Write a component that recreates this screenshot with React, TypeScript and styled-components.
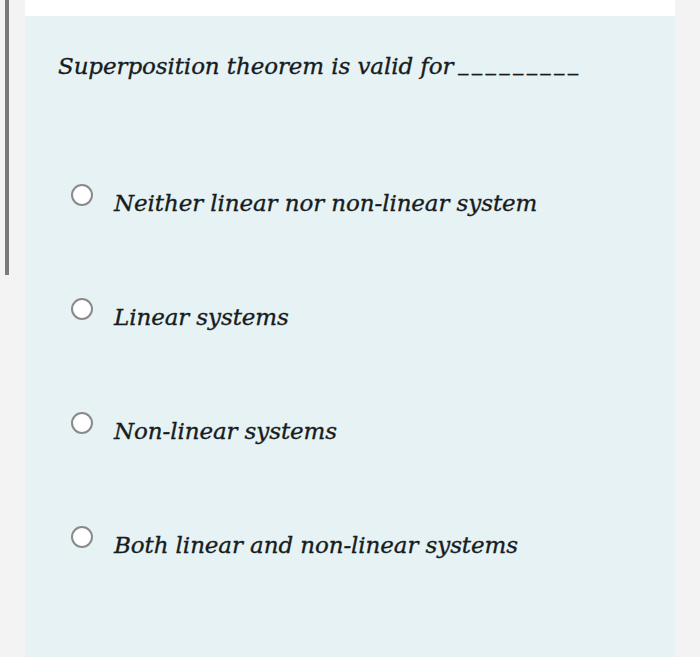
import React from "react";
import styled, { createGlobalStyle } from "styled-components";

const Global = createGlobalStyle`
  html, body { margin: 0; padding: 0; background: #f3f3f4; }
  body { width: 700px; height: 657px; overflow: hidden; }
`;

const Page = styled.div`
  position: relative;
  width: 700px;
  height: 657px;
  display: flex;
  padding-left: 25px;
  box-sizing: border-box;
  background: #f3f3f4;
`;

const ScrollThumb = styled.div`
  position: absolute;
  left: 5px;
  top: 0;
  width: 4px;
  height: 275px;
  background: #7a7a7a;
`;

const Card = styled.div`
  width: 650px;
  display: flex;
  flex-direction: column;
`;

const CardTop = styled.div`
  height: 16px;
  background: #ffffff;
`;

const Body = styled.div`
  flex: 1;
  background: #e6f2f4;
  padding: 34px 0 0 33px;
  font-family: "DejaVu Serif", "Liberation Serif", serif;
  font-style: italic;
  color: #161c21;
  -webkit-text-stroke: 0.35px #161c21;
`;

const Question = styled.div`
  height: 32px;
  font-size: 23px;
  line-height: 32px;
  letter-spacing: -0.1px;
  white-space: nowrap;
`;

const Blank = styled.span`
  margin-left: 5px;
  font-family: "Liberation Sans", Arial, sans-serif;
  font-style: normal;
  font-size: 18px;
  line-height: 0;
  letter-spacing: 3.7px;
  vertical-align: 3px;
  -webkit-text-stroke: 0.3px #161c21;
`;

const Options = styled.div`
  display: flex;
  flex-direction: column;
  gap: 82px;
  margin-top: 105px;
`;

const Option = styled.label`
  display: flex;
  align-items: flex-start;
  gap: 21px;
  padding-left: 13px;
  font-size: 23px;
  line-height: 32px;
  letter-spacing: -0.1px;
`;

const Radio = styled.span`
  width: 22px;
  height: 22px;
  margin-top: -3px;
  border-radius: 50%;
  border: 2.2px solid #8a8a8a;
  background: #ffffff;
  flex-shrink: 0;
  box-sizing: border-box;
  -webkit-text-stroke: 0;
`;

const options = [
  "Neither linear nor non-linear system",
  "Linear systems",
  "Non-linear systems",
  "Both linear and non-linear systems",
];

export default function App() {
  return (
    <Page>
      <Global />
      <ScrollThumb />
      <Card>
        <CardTop />
        <Body>
          <Question>
            Superposition theorem is valid for
            <Blank>_________</Blank>
          </Question>
          <Options>
            {options.map((o) => (
              <Option key={o}>
                <Radio />
                <span>{o}</span>
              </Option>
            ))}
          </Options>
        </Body>
      </Card>
    </Page>
  );
}
